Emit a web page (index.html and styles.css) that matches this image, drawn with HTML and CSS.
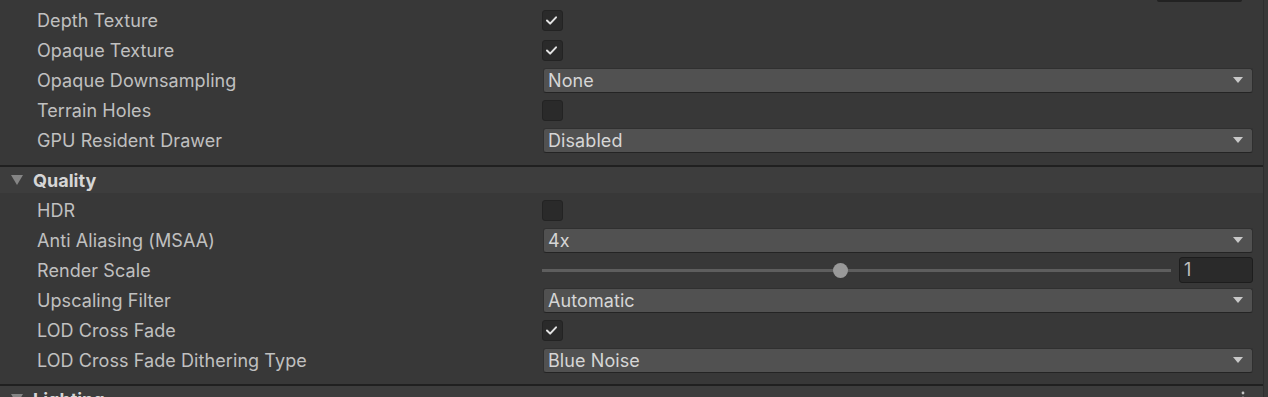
FILE: index.html
```html
<!DOCTYPE html>
<html lang="en">
<head>
    <meta charset="UTF-8">
    <meta name="viewport" content="width=device-width, initial-scale=1.0">
    <title>URP Asset Inspector</title>
    <link rel="stylesheet" href="styles.css">
</head>
<body>
    <div class="inspector">
        <div class="panel">
            <div class="peek"></div>
            <div class="section-body first">
                <div class="row">
                    <span class="label">Depth Texture</span>
                    <div class="field"><span class="toggle on"><svg viewBox="0 0 21 21"><path d="M5.5 10.5 L9 14 L15.5 7"/></svg></span></div>
                </div>
                <div class="row">
                    <span class="label">Opaque Texture</span>
                    <div class="field"><span class="toggle on"><svg viewBox="0 0 21 21"><path d="M5.5 10.5 L9 14 L15.5 7"/></svg></span></div>
                </div>
                <div class="row">
                    <span class="label">Opaque Downsampling</span>
                    <div class="field"><div class="dropdown"><span>None</span><i class="caret"></i></div></div>
                </div>
                <div class="row">
                    <span class="label">Terrain Holes</span>
                    <div class="field"><span class="toggle"></span></div>
                </div>
                <div class="row">
                    <span class="label">GPU Resident Drawer</span>
                    <div class="field"><div class="dropdown"><span>Disabled</span><i class="caret"></i></div></div>
                </div>
            </div>

            <div class="section-header">
                <i class="fold"></i><span>Quality</span>
            </div>
            <div class="section-body">
                <div class="row">
                    <span class="label">HDR</span>
                    <div class="field"><span class="toggle"></span></div>
                </div>
                <div class="row">
                    <span class="label">Anti Aliasing (MSAA)</span>
                    <div class="field"><div class="dropdown"><span>4x</span><i class="caret"></i></div></div>
                </div>
                <div class="row">
                    <span class="label">Render Scale</span>
                    <div class="field slider-field">
                        <div class="slider">
                            <div class="track"></div>
                            <div class="thumb" style="left: 47.4%"></div>
                        </div>
                        <div class="number">1</div>
                    </div>
                </div>
                <div class="row">
                    <span class="label">Upscaling Filter</span>
                    <div class="field"><div class="dropdown"><span>Automatic</span><i class="caret"></i></div></div>
                </div>
                <div class="row">
                    <span class="label">LOD Cross Fade</span>
                    <div class="field"><span class="toggle on"><svg viewBox="0 0 21 21"><path d="M5.5 10.5 L9 14 L15.5 7"/></svg></span></div>
                </div>
                <div class="row">
                    <span class="label">LOD Cross Fade Dithering Type</span>
                    <div class="field"><div class="dropdown"><span>Blue Noise</span><i class="caret"></i></div></div>
                </div>
            </div>

            <div class="section-header">
                <i class="fold"></i><span>Lighting</span>
                <svg class="menu" viewBox="0 0 4 16"><circle cx="2" cy="2" r="1.4"/><circle cx="2" cy="7" r="1.4"/><circle cx="2" cy="12" r="1.4"/></svg>
            </div>
        </div>
    </div>
</body>
</html>
```

FILE: styles.css
```css
html, body {
    margin: 0;
    padding: 0;
    background-color: #383838;
    overflow: hidden;
}
body {
    font-family: Inter, "Noto Sans", sans-serif;
    font-size: 18px;
    color: #c0c0c0;
    letter-spacing: 0.08px;
}
.inspector {
    display: flex;
    height: 397px;
}
.panel {
    width: 1263px;
    border-right: 1px solid #2e2e2e;
}
.peek {
    height: 2px;
    width: 85px;
    margin-left: 1157px;
    background-color: #222;
    border-radius: 0 0 3px 3px;
}
.section-body {
    padding: 2px 0 9px;
}
.section-body.first {
    padding: 3px 0 10px;
}
.row {
    display: flex;
    align-items: center;
    height: 30px;
}
.label {
    width: 505px;
    padding-left: 37px;
    white-space: nowrap;
}
.field {
    flex: 1;
    display: flex;
    align-items: center;
    padding-right: 10px;
}
.toggle {
    box-sizing: border-box;
    width: 21px;
    height: 21px;
    background-color: #2a2a2a;
    border: 1px solid #232323;
    border-radius: 3px;
    display: flex;
}
.toggle svg {
    width: 19px;
    height: 19px;
    fill: none;
    stroke: #e2e2e2;
    stroke-width: 2.2;
    stroke-linecap: round;
    stroke-linejoin: round;
    margin: 0 0 0 -1px;
}
.dropdown {
    box-sizing: border-box;
    flex: 1;
    margin-left: 1px;
    height: 25px;
    display: flex;
    align-items: center;
    justify-content: space-between;
    background-color: #515151;
    border: 1px solid #303030;
    border-bottom-color: #242424;
    border-radius: 3px;
    padding: 0 9px 0 4px;
    color: #d6d6d6;
}
.caret {
    width: 0;
    height: 0;
    border-left: 5px solid transparent;
    border-right: 5px solid transparent;
    border-top: 6px solid #c8c8c8;
}
.section-header {
    display: flex;
    align-items: center;
    height: 26px;
    background-color: #3d3d3d;
    border-top: 2px solid #202020;
    font-weight: 700;
    color: #d6d6d6;
    letter-spacing: 0;
}
.fold {
    width: 0;
    height: 0;
    margin: 0 10px 0 11px;
    border-left: 6px solid transparent;
    border-right: 6px solid transparent;
    border-top: 10px solid #858585;
}
.menu {
    width: 4px;
    height: 16px;
    margin-left: auto;
    margin-right: 18px;
    fill: #c4c4c4;
}
.slider-field {
    gap: 8px;
}
.slider {
    position: relative;
    flex: 1;
    height: 20px;
    display: flex;
    align-items: center;
}
.track {
    width: 100%;
    height: 3px;
    background-color: #5e5e5e;
}
.thumb {
    position: absolute;
    top: 3px;
    width: 15px;
    height: 15px;
    margin-left: -7px;
    border-radius: 50%;
    background-color: #999;
}
.number {
    box-sizing: border-box;
    width: 74px;
    height: 26px;
    background-color: #2a2a2a;
    border: 1px solid #1d1d1d;
    border-radius: 3px;
    padding-left: 4px;
    line-height: 24px;
}
```
